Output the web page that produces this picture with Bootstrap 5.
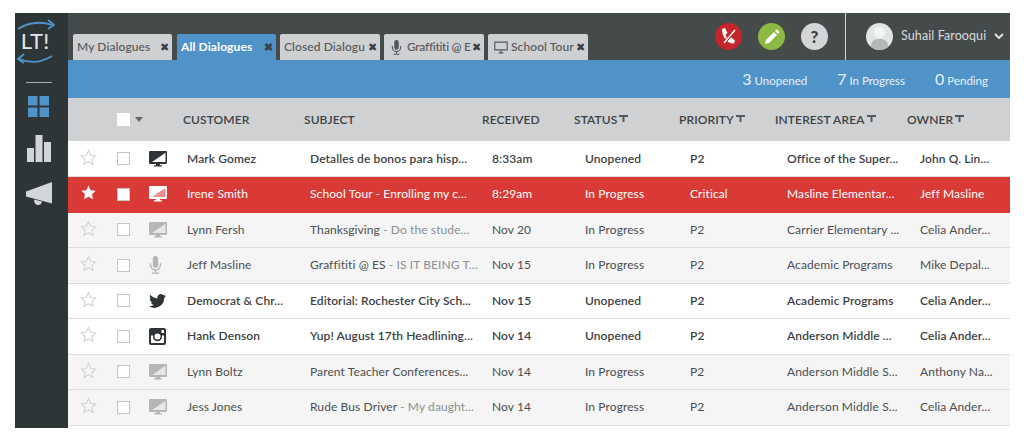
<!DOCTYPE html>
<html lang="en">
<head>
    <meta charset="UTF-8">
    <meta name="viewport" content="width=device-width, initial-scale=1.0">
    <title>All Dialogues</title>
    <link href="https://cdn.jsdelivr.net/npm/bootstrap@5.3.0/dist/css/bootstrap.min.css" rel="stylesheet">
    <style>
        html, body { height: 432px; overflow: hidden; background: #fff; }
        body { font-family: Lato, "Liberation Sans", sans-serif; color: #3c4143; letter-spacing: .1px; }
        .app-frame { margin: 13px 14px 0 15px; height: 415px; overflow: hidden; }
        .side-rail { width: 53px; background: #2e3537; padding-right: 6px; }
        .rail-line { width: 26px; height: 1px; background: #aab0b1; margin: 15px 0 13px; }
        .rail-bars { margin-top: 18px; }
        .rail-horn { margin-top: 20px; }
        .top-strip { height: 47px; background: #454a4a; }
        .tab-row { padding: 21px 0 0 5px; gap: 4px; }
        .dlg-tab { width: 100px; height: 26px; background: #cfd0d2; color: #54585a; font-size: 12px; font-weight: 500; border-radius: 2px 2px 0 0; padding: 0 3px 0 4px; white-space: nowrap; overflow: hidden; }
        .dlg-tab.short { width: 99px; }
        .dlg-tab.short:first-child { margin-right: 1px; }
        .dlg-tab.on { background: #4f93c9; color: #fff; font-weight: 700; }
        .dlg-tab .tab-name { overflow: hidden; flex: 1 1 auto; }
        .dlg-tab .tab-name.tight { letter-spacing: -.3px; }
        .dlg-tab .tab-x { font-size: 11px; color: #3c4143; flex: none; margin-left: 1px; }
        .tab-mic { color: #54585a; margin: 0 5px 0 3px; flex: none; }
        .tab-screen { color: #54585a; margin: 0 3px 0 2px; flex: none; }
        .round-btn { width: 27px; height: 27px; border-radius: 50%; margin-right: 16px; }
        .round-btn.end { margin-right: 0; }
        .btn-hang { background: #c4262c; }
        .btn-edit { background: #8cba45; }
        .btn-help { background: #d4d5d6; color: #3c4143; font-size: 17px; font-weight: 900; }
        .who { width: 165px; height: 47px; border-left: 1px solid #d5d7d7; margin-left: 17px; color: #d9dbdb; font-size: 12.5px; padding-left: 20px; }
        .stat-bar { height: 38px; background: #4f93c9; color: #e9f1f8; font-size: 11.5px; padding-right: 22px; gap: 30px; letter-spacing: 0; }
        .stat-bar b { font-size: 16px; font-weight: 400; }
        .dlg-table { table-layout: fixed; width: 942px; margin: 0; font-size: 12px; --bs-table-bg: transparent; }
        .dlg-table col:nth-child(1) { width: 47px; }
        .dlg-table col:nth-child(2) { width: 34px; }
        .dlg-table col:nth-child(3) { width: 34px; }
        .dlg-table col:nth-child(4) { width: 121px; }
        .dlg-table col:nth-child(5) { width: 178px; }
        .dlg-table col:nth-child(6) { width: 92px; }
        .dlg-table col:nth-child(7) { width: 105px; }
        .dlg-table col:nth-child(8) { width: 96px; }
        .dlg-table col:nth-child(9) { width: 132px; }
        .dlg-table col:nth-child(10) { width: 103px; }
        .dlg-table th { background: #d0d1d3; height: 43px; font-size: 12px; font-weight: 600; color: #3c4143; vertical-align: middle; padding: 0; border: 0; white-space: nowrap; }
        .dlg-table td { height: 35.5px; padding: 0; vertical-align: middle; white-space: nowrap; overflow: hidden; text-overflow: ellipsis; border-bottom: 1px solid #dcdcdc; color: #4a4e50; background: #f5f5f5; }
        .dlg-table tr.fresh td { background: #fff; font-weight: 600; color: #3c4143; }
        .dlg-table tr.hot td { background: #da3a35; color: #fff; border-color: #da3a35; }
        .dlg-table td.cell-customer { padding-left: 4px; }
        .dlg-table td.cell-subject { padding-left: 6px; }
        .dlg-table td.cell-received { padding-left: 10px; }
        .dlg-table td.cell-status, .dlg-table td.cell-priority { padding-left: 11px; }
        .dlg-table td.cell-area { padding-left: 12px; }
        .dlg-table td.cell-owner { padding-left: 13px; }
        .dlg-table td.cell-star { padding: 0 0 3px 12px; }
        .dlg-table td .faded { color: #8b8f91; font-weight: 400; }
        .dlg-table tr.hot td .faded { color: #fff; }
        .dlg-table td svg { display: block; }
        .box { display: block; width: 13px; height: 13px; margin-left: 2px; background: #fff; border: 1px solid #c4c5c6; }
        .head-box { border-color: #fff; }
        .head-caret { display: block; margin-left: -14px; }
        .funnel { margin-left: 2px; vertical-align: 2px; }
        .icon-dark { color: #2f3436; --tri: #fff; }
        .icon-grey { color: #b4b6b7; --tri: #e6e7e7; }
        .hot .icon-dark { color: #fff; --tri: #ee8f8b; }
        .star-mark { color: #d2d3d4; }
        .hot .star-mark { color: #fff; }
    </style>
</head>
<body>
    <svg width="0" height="0" class="position-absolute">
        <symbol id="monitor" viewBox="0 0 18 16">
            <path d="M1.200 0h15.600c.7 0 1.200.5 1.200 1.200v10.600c0 .7-.5 1.200-1.200 1.200H1.200C.5 13 0 12.500 0 11.800V1.200C0 .5.500 0 1.200 0z" fill="currentColor"/>
            <path d="M3 11L16.500 1.800V11z" fill="var(--tri)"/>
            <path d="M7 13h4v1.300h2V15.500H5v-1.200h2z" fill="currentColor"/>
        </symbol>
        <symbol id="mic" viewBox="0 0 14 20">
            <rect x="4" y="0" width="6" height="13" rx="3" fill="currentColor"/>
            <path d="M1.500 8v2a5.500 5.500 0 0 0 11 0V8M7 15.500V18M3 19h8" fill="none" stroke="currentColor" stroke-width="1.500"/>
        </symbol>
        <symbol id="star" viewBox="0 0 20 20">
            <path d="M10 1.800l2.500 5.500 6 .7-4.400 4.100 1.200 5.900-5.300-3-5.300 3 1.200-5.900L1.500 8l6-.7z" fill="none" stroke="currentColor" stroke-width="1.300"/>
        </symbol>
        <symbol id="star-fill" viewBox="0 0 20 20">
            <path d="M10 1.800l2.500 5.500 6 .7-4.400 4.100 1.200 5.900-5.300-3-5.300 3 1.200-5.900L1.500 8l6-.7z" fill="currentColor"/>
        </symbol>
        <symbol id="bird" viewBox="0 0 18 15">
            <path d="M18 1.800c-.7.300-1.400.5-2.100.6.800-.5 1.300-1.200 1.600-2-.7.400-1.500.7-2.300.9A3.700 3.700 0 0 0 8.900 4.700C5.900 4.500 3.200 3.100 1.300.8.300 2.500.800 4.600 2.400 5.700c-.6 0-1.200-.2-1.700-.5 0 1.800 1.300 3.300 3 3.700-.5.100-1.100.2-1.700.1.500 1.500 1.800 2.500 3.400 2.600A7.400 7.400 0 0 1 0 13.100 10.500 10.500 0 0 0 16.200 4.200c.7-.6 1.300-1.400 1.800-2.400z" fill="currentColor"/>
        </symbol>
        <symbol id="insta" viewBox="0 0 17 17">
            <path fill-rule="evenodd" fill="currentColor" d="M2 0h13c1.100 0 2 .9 2 2v13c0 1.100-.9 2-2 2H2c-1.100 0-2-.9-2-2V2C0 .9.900 0 2 0zm10.500 2v3H15V2zM2 7.500V15h13V7.500h-2.200a4.500 4.500 0 1 1-8.600 0zM8.500 5.500a3 3 0 1 0 0 6 3 3 0 0 0 0-6z"/>
        </symbol>
    </svg>

    <div class="app-frame d-flex">
        <!-- Side rail -->
        <div class="side-rail d-flex flex-column align-items-center flex-shrink-0">
            <svg width="47" height="54" viewBox="0 0 47 54" class="flex-shrink-0">
                <path d="M3 16Q19 6 37 12" fill="none" stroke="#4f93c9" stroke-width="1.800"/>
                <path d="M33 7l6 5-6 4" fill="none" stroke="#4f93c9" stroke-width="1.800"/>
                <path d="M37 43Q21 53 4 46" fill="none" stroke="#4f93c9" stroke-width="1.800"/>
                <path d="M9 41l-6 5 6 4" fill="none" stroke="#4f93c9" stroke-width="1.800"/>
                <text x="20" y="36" text-anchor="middle" font-family="Lato, sans-serif" font-size="22" fill="#e4e6e6">LT!</text>
            </svg>
            <div class="rail-line"></div>
            <svg width="21" height="21" viewBox="0 0 21 21">
                <path d="M0 0h9.500v9.500H0zM11.500 0H21v9.500h-9.500zM0 11.500h9.500V21H0zM11.500 11.500H21V21h-9.500z" fill="#4f93c9"/>
            </svg>
            <svg width="24" height="27" viewBox="0 0 24 27" class="rail-bars">
                <path d="M0 13h7v14H0zM8.500 0h7v27h-7zM17 7h7v20h-7z" fill="#d3d5d6"/>
            </svg>
            <svg width="26" height="23" viewBox="0 0 26 23" class="rail-horn">
                <path d="M0 9.500L26 0v21.500L0 14.500z" fill="#d3d5d6"/>
                <path d="M8 17.500l8 2c-.5 2.500-1.500 3.500-4 3.500-2.500 0-4-2-4-5.500z" fill="#d3d5d6"/>
            </svg>
        </div>

        <!-- Main area -->
        <div class="flex-grow-1 overflow-hidden">
            <div class="top-strip d-flex justify-content-between">
                <div class="tab-row d-flex">
                    <div class="dlg-tab short d-flex align-items-center"><span class="tab-name">My Dialogues</span><span class="tab-x">✖</span></div>
                    <div class="dlg-tab short on d-flex align-items-center"><span class="tab-name">All Dialogues</span><span class="tab-x">✖</span></div>
                    <div class="dlg-tab d-flex align-items-center"><span class="tab-name">Closed Dialogu</span><span class="tab-x">✖</span></div>
                    <div class="dlg-tab d-flex align-items-center"><svg width="11" height="15" class="tab-mic"><use href="#mic"/></svg><span class="tab-name tight">Graffititi @ E</span><span class="tab-x">✖</span></div>
                    <div class="dlg-tab d-flex align-items-center"><svg width="14" height="13" class="tab-screen" viewBox="0 0 18 16"><path d="M1 1h16v10H1zM6 15h6M9 11v4" fill="none" stroke="currentColor" stroke-width="1.500"/></svg><span class="tab-name">School Tour</span><span class="tab-x">✖</span></div>
                </div>
                <div class="d-flex align-items-center">
                    <div class="round-btn btn-hang d-flex align-items-center justify-content-center">
                        <svg width="19" height="19" viewBox="0 0 19 19"><path d="M3 2l3-1 2.500 5-2 1.500c.5 2 2 3.500 3.500 4.500l2.500-1.500 3.500 3-1 3c-6 .5-12-6-12-14.500z" fill="#fff"/><path d="M16 3L5 16" stroke="#c4262c" stroke-width="3.200"/><path d="M16 3L5 16" stroke="#fff" stroke-width="1.300"/></svg>
                    </div>
                    <div class="round-btn btn-edit d-flex align-items-center justify-content-center">
                        <svg width="16" height="16" viewBox="0 0 16 16"><path d="M1 15l1-4 8-8 3 3-8 8zM11 2l1-1c.5-.5 1-.5 1.500 0l1.500 1.500c.5.5.5 1 0 1.500l-1 1z" fill="#fff"/></svg>
                    </div>
                    <div class="round-btn end btn-help d-flex align-items-center justify-content-center">?</div>
                    <div class="who d-flex align-items-center">
                        <svg width="27" height="27" viewBox="0 0 27 27" class="flex-shrink-0 me-2"><circle cx="13.500" cy="13.500" r="13.500" fill="#e3e4e5"/><circle cx="13.500" cy="9.500" r="5.500" fill="#f4f4f4"/><path d="M5 24c0-6 3-8 8.500-8S22 18 22 24c-5 4-12 4-17 0z" fill="#b5b6b8"/></svg>
                        <span>Suhail Farooqui</span>
                        <svg width="10" height="7" viewBox="0 0 10 7" class="ms-2"><path d="M1 1l4 4 4-4" fill="none" stroke="#e8e9e9" stroke-width="1.800"/></svg>
                    </div>
                </div>
            </div>

            <div class="stat-bar d-flex align-items-center justify-content-end">
                <span><b>3</b> Unopened</span>
                <span><b>7</b> In Progress</span>
                <span><b>0</b> Pending</span>
            </div>

            <table class="table dlg-table">
                <colgroup>
                    <col><col><col><col><col><col><col><col><col><col>
                </colgroup>
                <thead>
                    <tr>
                        <th></th>
                        <th><span class="box head-box"></span></th>
                        <th><svg width="8" height="5" class="head-caret" viewBox="0 0 8 5"><path d="M0 0h8L4 5z" fill="#66696b"/></svg></th>
                        <th>CUSTOMER</th><th>SUBJECT</th><th>RECEIVED</th>
                        <th>STATUS</th><th>PRIORITY</th><th>INTEREST AREA</th><th>OWNER</th>
                    </tr>
                </thead>
                <tbody id="dlgRows"></tbody>
            </table>
        </div>
    </div>

    <script src="https://cdn.jsdelivr.net/npm/bootstrap@5.3.0/dist/js/bootstrap.bundle.min.js"></script>
    <script>
        // cls, channel, customer, subject, preview, received, status, priority, area, owner
        const rows = [
            ['fresh', 'monitor', 'Mark Gomez', 'Detalles de bonos para hisp...', '', '8:33am', 'Unopened', 'P2', 'Office of the Super...', 'John Q. Lin...'],
            ['hot', 'monitor', 'Irene Smith', 'School Tour - Enrolling my c...', '', '8:29am', 'In Progress', 'Critical', 'Masline Elementar...', 'Jeff Masline'],
            ['', 'monitor', 'Lynn Fersh', 'Thanksgiving', ' - Do the stude...', 'Nov 20', 'In Progress', 'P2', 'Carrier Elementary ...', 'Celia Ander...'],
            ['', 'mic', 'Jeff Masline', 'Graffititi @ ES', ' - IS IT BEING T...', 'Nov 15', 'In Progress', 'P2', 'Academic Programs', 'Mike Depal...'],
            ['fresh', 'bird', 'Democrat &amp; Chr...', 'Editorial: Rochester City Sch...', '', 'Nov 15', 'Unopened', 'P2', 'Academic Programs', 'Celia Ander...'],
            ['fresh', 'insta', 'Hank Denson', 'Yup! August 17th Headlining...', '', 'Nov 14', 'Unopened', 'P2', 'Anderson Middle ...', 'Celia Ander...'],
            ['', 'monitor', 'Lynn Boltz', 'Parent Teacher Conferences...', '', 'Nov 14', 'In Progress', 'P2', 'Anderson Middle S...', 'Anthony Na...'],
            ['', 'monitor', 'Jess Jones', 'Rude Bus Driver', ' - My daught...', 'Nov 14', 'In Progress', 'P2', 'Anderson Middle S...', 'Celia Ander...']
        ];
        const sizes = { monitor: [18, 16], mic: [13, 18], bird: [17, 14], insta: [17, 17] };

        document.getElementById('dlgRows').innerHTML = rows.map(r => {
            const tone = (r[0] === 'fresh' || r[0] === 'hot') ? 'icon-dark' : 'icon-grey';
            const [w, h] = sizes[r[1]];
            const star = r[0] === 'hot' ? 'star-fill' : 'star';
            return `<tr class="${r[0]}">
                <td class="cell-star"><svg width="17" height="17" class="star-mark"><use href="#${star}"/></svg></td>
                <td><span class="box"></span></td>
                <td><svg width="${w}" height="${h}" class="${tone}"><use href="#${r[1]}"/></svg></td>
                <td class="cell-customer">${r[2]}</td>
                <td class="cell-subject">${r[3]}<span class="faded">${r[4]}</span></td>
                <td class="cell-received">${r[5]}</td>
                <td class="cell-status">${r[6]}</td>
                <td class="cell-priority">${r[7]}</td>
                <td class="cell-area">${r[8]}</td>
                <td class="cell-owner">${r[9]}</td>
            </tr>`;
        }).join('');

        // filter funnel next to the filterable headers
        const funnel = '<svg width="9" height="7" viewBox="0 0 9 7" class="funnel"><path d="M0 0h9v2H5.500v5h-2V2H0z" fill="#55595b"/></svg>';
        document.querySelectorAll('.dlg-table th').forEach((th, i) => {
            if (i >= 6) th.innerHTML = th.textContent.trim() + funnel;
        });
    </script>
</body>
</html>
